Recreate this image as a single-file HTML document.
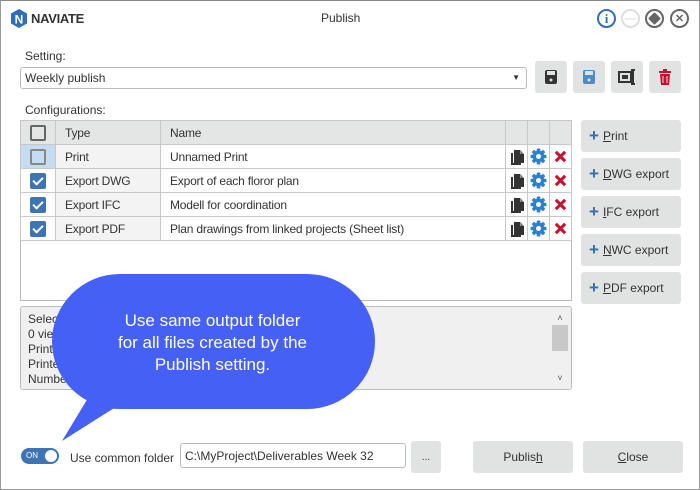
<!DOCTYPE html>
<html><head><style>
*{box-sizing:border-box;margin:0;padding:0}
body{width:700px;height:490px;background:#fff;font-family:"Liberation Sans",sans-serif;font-size:12px;color:#333;position:relative;overflow:hidden}
.win{position:absolute;left:0;top:0;width:700px;height:490px;border:1px solid #9a9a9a;border-top-color:#888}
.a{position:absolute}
.btn{position:absolute;background:#e1e3e3;border-radius:3px}
.ic{position:absolute;width:19px;height:19px;border-radius:50%;border:2px solid #666;display:flex;align-items:center;justify-content:center;font-weight:bold;font-size:11px;color:#666}
table{border-collapse:collapse;position:absolute;left:20px;top:120px;width:552px}
td{border:1px solid #c8c8c8;height:24px;padding:0 0 0 9px;font-size:12px;color:#333;letter-spacing:-0.2px}
.cb{width:16px;height:16px;border:2px solid #666;border-radius:2px;display:inline-block;vertical-align:middle}
.ck{width:16px;height:16px;background:#3d74b4;border-radius:2px;display:inline-block;vertical-align:middle;position:relative}
.ck:after{content:"";position:absolute;left:5px;top:2px;width:4px;height:8px;border:solid #fff;border-width:0 2px 2px 0;transform:rotate(45deg)}
.rb{position:absolute;left:581px;width:100px;height:32px;background:#e1e3e3;border-radius:3px;font-size:12px;line-height:32px;padding-left:8px}
.rb b{color:#2f6fb7;font-size:17px;vertical-align:-1px;margin-right:4px}
td.i{padding:0;text-align:center;line-height:0}
</style></head><body>
<div class="win"></div>
<svg width="0" height="0" style="position:absolute"><defs>
<symbol id="cp" viewBox="0 0 16 16"><path d="M2 4h2v10h8v2H2z" fill="#333"/><path d="M5 1h6l4 4v9H5z" fill="#333"/><path d="M11 1v4h4" fill="#888"/></symbol>
<symbol id="gr" viewBox="0 0 16 16"><g fill="#2f7fd0"><circle cx="8" cy="8" r="5.5"/><rect x="6.3" y="0.5" width="3.4" height="15" rx="0.8"/><rect x="6.3" y="0.5" width="3.4" height="15" rx="0.8" transform="rotate(45 8 8)"/><rect x="6.3" y="0.5" width="3.4" height="15" rx="0.8" transform="rotate(90 8 8)"/><rect x="6.3" y="0.5" width="3.4" height="15" rx="0.8" transform="rotate(135 8 8)"/></g><circle cx="8" cy="8" r="2.3" fill="#fff"/></symbol>
<symbol id="x" viewBox="0 0 16 16"><path d="M3 3L13 13M13 3L3 13" stroke="#c8102e" stroke-width="3.2"/></symbol>
</defs></svg>
<svg class="a" style="left:10px;top:9px" width="18" height="19" viewBox="0 0 18 19"><polygon points="9,0 17,4.5 17,14.5 9,19 1,14.5 1,4.5" fill="#2f6fb7"/><text x="9" y="14.5" fill="#fff" font-size="12" font-weight="bold" text-anchor="middle" font-family="Liberation Sans">N</text></svg>
<div class="a" style="left:31px;top:11px;font-size:13px;font-weight:bold;color:#333;letter-spacing:-0.3px">NAVIATE</div>
<div class="a" style="left:321px;top:11px;font-size:12px">Publish</div>
<div class="ic" style="left:597px;top:9px;border-color:#2f6fb7;color:#2f6fb7;font-family:'Liberation Serif';font-size:13px">i</div>
<div class="ic" style="left:621px;top:9px;border-color:#ddd;color:#ddd">—</div>
<div class="ic" style="left:645px;top:9px"><span style="width:9px;height:9px;background:#666;transform:rotate(45deg);display:block;border-radius:1px"></span></div>
<div class="ic" style="left:670px;top:9px">✕</div>
<div class="a" style="left:25px;top:49px">Setting:</div>
<div class="a" style="left:20px;top:67px;width:507px;height:22px;border:1px solid #bbb;border-radius:3px;padding:3px 4px;font-size:12px">Weekly publish<span style="position:absolute;right:6px;top:5px;font-size:8px">▼</span></div>
<div class="btn" style="left:535px;top:61px;width:32px;height:32px"><svg width="32" height="32"><rect x="10" y="9" width="12" height="14" rx="2" fill="#333"/><rect x="12" y="10" width="8" height="4" fill="#e1e3e3"/><circle cx="16" cy="19" r="1.5" fill="#e1e3e3"/></svg></div>
<div class="btn" style="left:573px;top:61px;width:32px;height:32px"><svg width="32" height="32"><rect x="10" y="9" width="12" height="14" rx="2" fill="#4a8ad0"/><rect x="12" y="10" width="8" height="4" fill="#e1e3e3"/><circle cx="16" cy="19" r="1.5" fill="#e1e3e3"/></svg></div>
<div class="btn" style="left:611px;top:61px;width:32px;height:32px"><svg width="32" height="32"><rect x="8" y="11" width="12" height="10" fill="none" stroke="#333" stroke-width="2"/><rect x="11" y="14" width="6" height="4" fill="#333"/><path d="M22 9v14M20 9h4M20 23h4" stroke="#333" stroke-width="2"/></svg></div>
<div class="btn" style="left:649px;top:61px;width:32px;height:32px"><svg width="32" height="32"><rect x="10" y="10" width="12" height="2" fill="#c8102e"/><rect x="14" y="8" width="4" height="2" fill="#c8102e"/><path d="M11 13h10l-1 11h-8z" fill="#c8102e"/><path d="M14 15v7M18 15v7" stroke="#e1e3e3"/></svg></div>
<div class="a" style="left:25px;top:103px">Configurations:</div>
<div class="a" style="left:20px;top:120px;width:552px;height:181px;border:1px solid #bbb"></div>
<table>
<tr style="background:#e4e6e6"><td style="width:35px;padding-left:9px"><span class="cb"></span></td><td style="width:105px">Type</td><td>Name</td><td style="width:22px"></td><td style="width:22px"></td><td style="width:22px"></td></tr>
<tr><td style="background:#c6dcf0"><span class="cb" style="border-color:#888"></span></td><td style="background:#f3f3f3">Print</td><td>Unnamed Print</td><td class="i"><svg width="16" height="16"><use href="#cp"/></svg></td><td class="i"><svg width="17" height="17"><use href="#gr"/></svg></td><td class="i"><svg width="15" height="15"><use href="#x"/></svg></td></tr>
<tr><td><span class="ck"></span></td><td style="background:#f3f3f3">Export DWG</td><td>Export of each floror plan</td><td class="i"><svg width="16" height="16"><use href="#cp"/></svg></td><td class="i"><svg width="17" height="17"><use href="#gr"/></svg></td><td class="i"><svg width="15" height="15"><use href="#x"/></svg></td></tr>
<tr><td><span class="ck"></span></td><td style="background:#f3f3f3">Export IFC</td><td>Modell for coordination</td><td class="i"><svg width="16" height="16"><use href="#cp"/></svg></td><td class="i"><svg width="17" height="17"><use href="#gr"/></svg></td><td class="i"><svg width="15" height="15"><use href="#x"/></svg></td></tr>
<tr><td><span class="ck"></span></td><td style="background:#f3f3f3">Export PDF</td><td>Plan drawings from linked projects (Sheet list)</td><td class="i"><svg width="16" height="16"><use href="#cp"/></svg></td><td class="i"><svg width="17" height="17"><use href="#gr"/></svg></td><td class="i"><svg width="15" height="15"><use href="#x"/></svg></td></tr>
</table>
<div class="rb" style="top:120px"><b>+</b><u>P</u>rint</div>
<div class="rb" style="top:158px"><b>+</b><u>D</u>WG export</div>
<div class="rb" style="top:196px"><b>+</b><u>I</u>FC export</div>
<div class="rb" style="top:234px"><b>+</b><u>N</u>WC export</div>
<div class="rb" style="top:272px"><b>+</b><u>P</u>DF export</div>
<div class="a" style="left:20px;top:306px;width:552px;height:84px;background:#f0f0f0;border:1px solid #bbb;border-radius:3px;padding:5px 7px;line-height:15px;font-size:12px">Selected<br>0 views<br>Printer<br>Printer<br>Number</div>
<div class="a" style="left:552px;top:313px;width:16px;height:70px;color:#555;font-size:9px;text-align:center">˄<div style="background:#c8c8c8;height:26px;margin:2px 0 22px"></div>˅</div>
<svg class="a" style="left:0;top:270px" width="400" height="180"><path d="M62 171 L88 128 L130 128 Z" fill="#4560f5"/><rect x="52" y="4" width="323" height="135" rx="68" fill="#4560f5"/></svg>
<div class="a" style="left:90px;top:310px;width:245px;text-align:center;color:#fff;font-size:17px;line-height:22px">Use same output folder<br>for all files created by the<br>Publish setting.</div>
<div class="a" style="left:21px;top:448px;width:38px;height:16px;background:#3d74b4;border-radius:8px;color:#fff;font-size:8px;line-height:16px;padding-left:5px">ON<span style="position:absolute;right:2px;top:2px;width:12px;height:12px;background:#fff;border-radius:50%"></span></div>
<div class="a" style="left:70px;top:451px">Use common folder</div>
<div class="a" style="left:180px;top:443px;width:226px;height:25px;border:1px solid #bbb;border-radius:3px;padding:5px 4px">C:\MyProject\Deliverables Week 32</div>
<div class="btn" style="left:411px;top:441px;width:30px;height:32px;text-align:center;line-height:34px;font-size:10px">...</div>
<div class="btn" style="left:473px;top:441px;width:100px;height:32px;text-align:center;line-height:32px">Publis<u>h</u></div>
<div class="btn" style="left:583px;top:441px;width:100px;height:32px;text-align:center;line-height:32px"><u>C</u>lose</div>
</body></html>
